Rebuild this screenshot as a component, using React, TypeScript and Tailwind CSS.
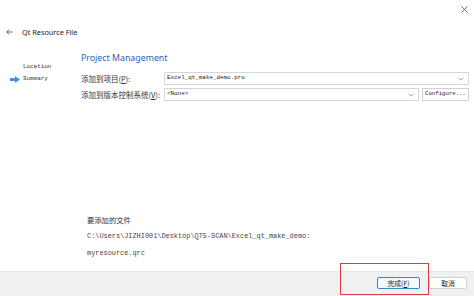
import React from 'react'

const mono = { fontFamily: '"Liberation Mono", "DejaVu Sans Mono", monospace' }

function Chevron() {
    return (
        <svg width="6" height="4" viewBox="0 0 6 4" className="shrink-0">
            <path d="M0.5 0.8 L3 3.2 L5.5 0.8" fill="none" stroke="#8a8a8a" strokeWidth="0.8" />
        </svg>
    )
}

function Combo({ text, className }: { text: string; className: string }) {
    return (
        <div className={`h-[13px] border border-[#d6d6d6] bg-white flex items-center justify-between pl-[2px] pr-[4px] ${className}`}>
            <span className="text-[5.9px] text-[#222]" style={mono}>{text}</span>
            <Chevron />
        </div>
    )
}

export default function App() {
    return (
        <div className="relative w-[474px] h-[296px] bg-white flex flex-col overflow-hidden font-['Noto_Sans_CJK_SC','Noto_Sans',sans-serif] text-[#333]">
            {/* close */}
            <div className="h-[18px] flex justify-end items-center pr-[6px]">
                <svg width="7" height="7" viewBox="0 0 7 7">
                    <path d="M0.5 0.5 L6.5 6.5 M6.5 0.5 L0.5 6.5" stroke="#444" strokeWidth="0.8" />
                </svg>
            </div>

            {/* header */}
            <div className="h-[28px] flex items-center pl-[6px] gap-[9px]">
                <svg width="7" height="6" viewBox="0 0 7 6">
                    <path d="M6.5 3 H0.8 M3 0.6 L0.7 3 L3 5.4" fill="none" stroke="#444" strokeWidth="0.8" />
                </svg>
                <span className="text-[7.3px] text-[#222] font-['Noto_Sans',sans-serif]">Qt Resource File</span>
            </div>

            {/* body */}
            <div className="flex-1 flex">
                <div className="w-[81px] pt-[15px] flex flex-col">
                    <div className="h-[12px] flex items-center pl-[23px]">
                        <span className="text-[5.9px] text-[#333]" style={mono}>Location</span>
                    </div>
                    <div className="h-[12px] flex items-center pl-[10px] gap-[3px]">
                        <svg width="10" height="7" viewBox="0 0 10 7">
                            <path d="M0 2 H5 V0 L10 3.5 L5 7 V5 H0 Z" fill="#4a8fdb" />
                        </svg>
                        <span className="text-[5.9px] text-[#333]" style={mono}>Summary</span>
                    </div>
                </div>

                <div className="flex-1 flex flex-col pr-[5px]">
                    <div className="pt-[5px] h-[19px] flex items-center">
                        <span className="text-[8.8px] leading-[14px] text-[#2f63ad] font-['Noto_Sans',sans-serif]">Project Management</span>
                    </div>
                    <div className="mt-[7px] flex items-center">
                        <span className="w-[83px] shrink-0 text-[7.5px] text-[#333]">添加到项目(<span className="underline">P</span>):</span>
                        <Combo text="Excel_qt_make_demo.pro" className="flex-1" />
                    </div>
                    <div className="mt-[3px] flex items-center">
                        <span className="w-[83px] shrink-0 text-[7.5px] text-[#333] whitespace-nowrap">添加到版本控制系统(<span className="underline">V</span>):</span>
                        <Combo text="<None>" className="flex-1" />
                        <div className="ml-[3px] w-[47px] h-[13px] border border-[#d0d0d0] bg-white flex items-center justify-center">
                            <span className="text-[5.7px] text-[#222]" style={mono}>Configure...</span>
                        </div>
                    </div>

                    <div className="mt-auto pl-[6px] pb-[12px] flex flex-col gap-[4px]">
                        <span className="h-[12px] leading-[12px] text-[7.3px] text-[#333]">要添加的文件</span>
                        <span className="h-[12px] leading-[12px] text-[6.9px] text-[#444]" style={mono}>C:\Users\JIZHI001\Desktop\QT5-SCAN\Excel_qt_make_demo:</span>
                        <span className="mt-[1px] h-[12px] leading-[12px] text-[6.9px] text-[#444]" style={mono}>myresource.qrc</span>
                    </div>
                </div>
            </div>

            {/* footer */}
            <div className="h-[25px] bg-[#f0f0f0] border-t border-[#e6e6e6] flex justify-end items-start pt-[5px] pr-[7px] gap-[9px]">
                <div className="w-[43px] h-[12px] rounded-[2px] border border-[#3d84c6] bg-[#f3f8fd] flex items-center justify-center">
                    <span className="text-[6.8px] text-[#222]">完成(<span className="underline">F</span>)</span>
                </div>
                <div className="w-[38px] h-[12px] rounded-[2px] border border-[#d0d0d0] bg-white flex items-center justify-center">
                    <span className="text-[6.8px] text-[#222]">取消</span>
                </div>
            </div>

            {/* annotation */}
            <div className="absolute left-[340px] top-[263px] w-[89px] h-[32px] border-[1.5px] border-[#dc3b45]" />
        </div>
    )
}
